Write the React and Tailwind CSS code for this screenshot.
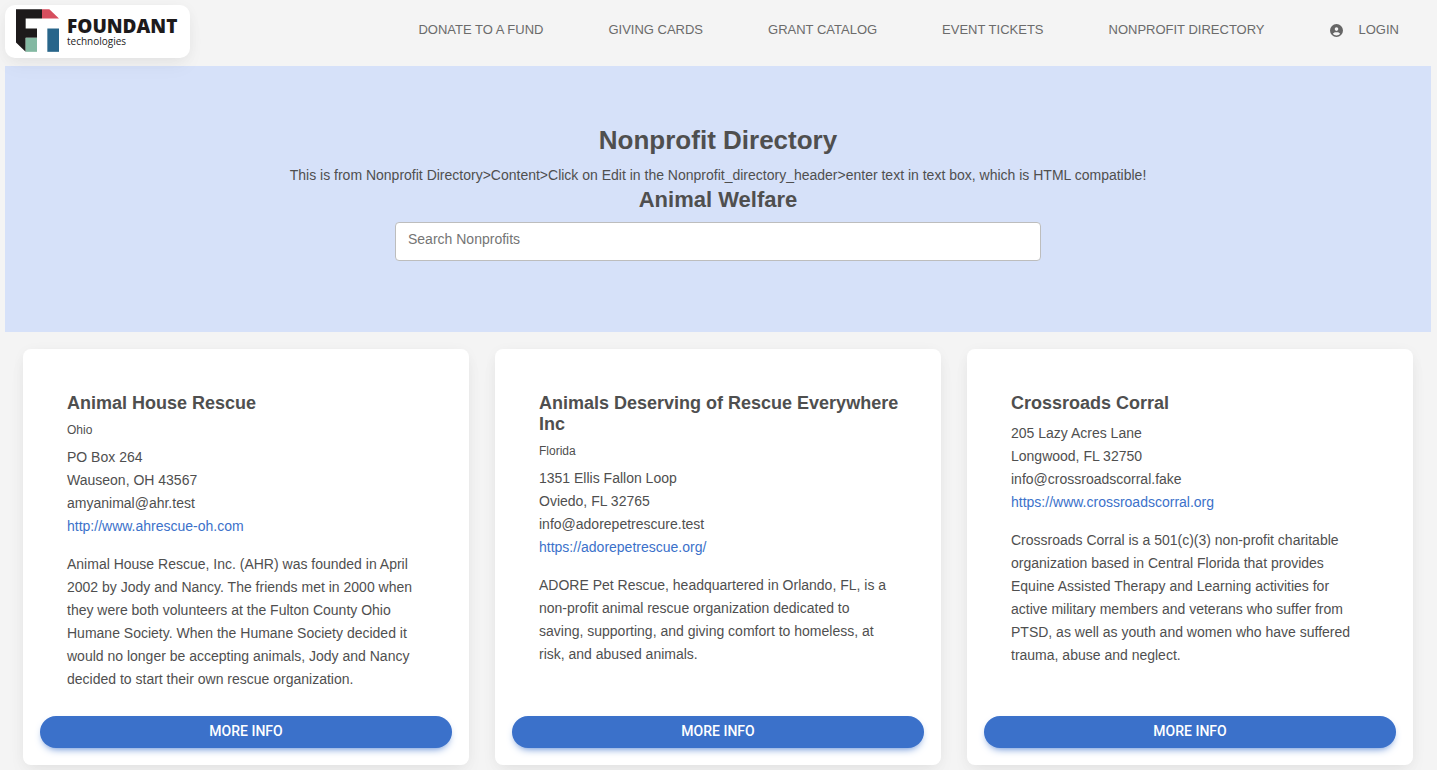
import { FaCircleUser } from "react-icons/fa6";

const navItems = [
  "Donate to a fund",
  "Giving cards",
  "Grant catalog",
  "Event tickets",
  "Nonprofit directory",
];

const nonprofits = [
  {
    name: "Animal House Rescue",
    region: "Ohio",
    address: ["PO Box 264", "Wauseon, OH 43567"],
    email: "amyanimal@ahr.test",
    url: "http://www.ahrescue-oh.com",
    description:
      "Animal House Rescue, Inc. (AHR) was founded in April 2002 by Jody and Nancy. The friends met in 2000 when they were both volunteers at the Fulton County Ohio Humane Society. When the Humane Society decided it would no longer be accepting animals, Jody and Nancy decided to start their own rescue organization.",
  },
  {
    name: "Animals Deserving of Rescue Everywhere Inc",
    region: "Florida",
    address: ["1351 Ellis Fallon Loop", "Oviedo, FL 32765"],
    email: "info@adorepetrescure.test",
    url: "https://adorepetrescue.org/",
    description:
      "ADORE Pet Rescue, headquartered in Orlando, FL, is a non-profit animal rescue organization dedicated to saving, supporting, and giving comfort to homeless, at risk, and abused animals.",
  },
  {
    name: "Crossroads Corral",
    address: ["205 Lazy Acres Lane", "Longwood, FL 32750"],
    email: "info@crossroadscorral.fake",
    url: "https://www.crossroadscorral.org",
    description:
      "Crossroads Corral is a 501(c)(3) non-profit charitable organization based in Central Florida that provides Equine Assisted Therapy and Learning activities for active military members and veterans who suffer from PTSD, as well as youth and women who have suffered trauma, abuse and neglect.",
  },
];

function Logo() {
  return (
    <a
      href="#"
      className="flex h-[53px] w-[185px] items-start gap-2 rounded-[10px] bg-white pt-1 pl-[11px] shadow-[0_2px_15px_-3px_rgba(0,0,0,0.07),0_10px_20px_-2px_rgba(0,0,0,0.04)]"
    >
      <svg viewBox="0 0 129 128" className="h-[43px] w-[43px] shrink-0" aria-hidden="true">
        <path d="M0 0H78V28H29V58H63V86H29V128L0 100Z" fill="#1d1a1b" />
        <path d="M78 0H100L129 28H78Z" fill="#d64e5e" />
        <path d="M29 86H63V128H29Z" fill="#83b8a2" />
        <path d="M94 58H129V128H94Z" fill="#28658a" />
      </svg>
      <span className="flex flex-col pt-[7px] font-['Open_Sans',sans-serif] text-[#1d1a1b]">
        <span className="text-[19px] leading-[20px] font-extrabold">FOUNDANT</span>
        <span className="text-[10px] leading-[10px]">technologies</span>
      </span>
    </a>
  );
}

function NonprofitCard({ org }) {
  return (
    <article className="flex flex-col rounded-lg bg-white px-[17px] pt-11 pb-[17px] shadow-[0_2px_15px_-3px_rgba(0,0,0,0.07),0_10px_20px_-2px_rgba(0,0,0,0.04)]">
      <div className="flex-1 px-[27px] pb-[25px]">
        <h3 className="-mr-2 mb-2 text-[18px] leading-[21px] font-bold">{org.name}</h3>
        {org.region && <p className="mb-2 text-[12px] leading-[16px]">{org.region}</p>}
        <address className="mb-[15px] text-[14px] leading-[23px] not-italic">
          {org.address.map((line) => (
            <p key={line}>{line}</p>
          ))}
          <p>{org.email}</p>
          <a href={org.url} className="text-[#3b71ca]">
            {org.url}
          </a>
        </address>
        <p className="text-[14px] leading-[23px]">{org.description}</p>
      </div>
      <button
        type="button"
        className="h-8 rounded-full bg-[#3b71ca] pb-0.5 font-['Roboto',sans-serif] text-[14px] leading-[22px] font-medium text-white uppercase shadow-[0_4px_9px_-4px_#3b71ca]"
      >
        More info
      </button>
    </article>
  );
}

export default function App() {
  return (
    <div className="min-h-screen bg-[#f4f4f4] pt-[5px] pr-[6px] pb-[5px] pl-[5px] font-['Liberation_Sans',Arial,sans-serif] text-[#4f4f4f]">
      <header className="flex items-start justify-between pb-2">
        <Logo />
        <nav className="flex gap-[65px] pt-[14px] pr-8 text-[13px] leading-[22px] text-[#6b6b6b] uppercase">
          {navItems.map((item) => (
            <a key={item} href="#">
              {item}
            </a>
          ))}
          <a href="#" className="flex items-center gap-4">
            <FaCircleUser className="size-[13px] text-[#666666]" aria-hidden="true" />
            Login
          </a>
        </nav>
      </header>

      <main>
        <section className="flex flex-col items-center bg-[#d6e1f9] pt-[58px] pb-[71px] text-center">
          <h1 className="mb-2 text-[26px] leading-[32px] font-bold">Nonprofit Directory</h1>
          <p className="text-[14px] leading-[22px]">
            This is from Nonprofit Directory&gt;Content&gt;Click on Edit in the
            Nonprofit_directory_header&gt;enter text in text box, which is HTML compatible!
          </p>
          <h2 className="mb-2 text-[22px] leading-[28px] font-bold">Animal Welfare</h2>
          <input
            type="search"
            aria-label="Search Nonprofits"
            placeholder="Search Nonprofits"
            className="h-[39px] w-[646px] max-w-full rounded border border-[#bdbdbd] bg-white px-3 pb-1.5 text-[14px] placeholder:text-[#757575]"
          />
        </section>

        <section className="grid grid-cols-3 gap-[26px] px-[18px] pt-[17px]">
          {nonprofits.map((org) => (
            <NonprofitCard key={org.name} org={org} />
          ))}
        </section>
      </main>
    </div>
  );
}
